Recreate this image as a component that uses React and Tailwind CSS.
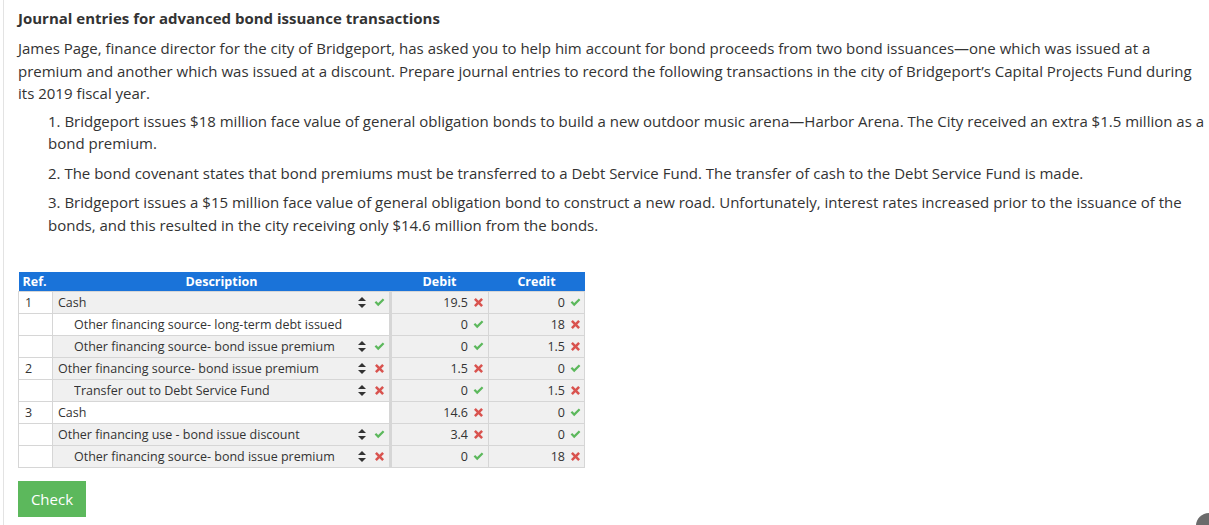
import React from "react";

const Sort = () => (
  <svg width="8" height="11" viewBox="0 0 8 11" className="inline-block">
    <path d="M4 0 L8 4 L0 4 Z" fill="#333" />
    <path d="M0 7 L8 7 L4 11 Z" fill="#333" />
  </svg>
);

const Ok = () => (
  <svg width="11" height="9" viewBox="0 0 11 9" className="inline-block">
    <path d="M0.6 4.6 L2.2 3 L4.2 5 L8.8 0.4 L10.4 2 L4.2 8.2 Z" fill="#5cb85c" />
  </svg>
);

const Bad = () => (
  <svg width="9" height="9" viewBox="0 0 9 9" className="inline-block">
    <path d="M1.8 0 L4.5 2.7 L7.2 0 L9 1.8 L6.3 4.5 L9 7.2 L7.2 9 L4.5 6.3 L1.8 9 L0 7.2 L2.7 4.5 L0 1.8 Z" fill="#d9534f" />
  </svg>
);

const rows = [
  { ref: "1", desc: "Cash", indent: false, sel: true, dOk: true, debit: "19.5", dbOk: false, credit: "0", crOk: true },
  { ref: "", desc: "Other financing source- long-term debt issued", indent: true, sel: false, debit: "0", dbOk: true, credit: "18", crOk: false },
  { ref: "", desc: "Other financing source- bond issue premium", indent: true, sel: true, dOk: true, debit: "0", dbOk: true, credit: "1.5", crOk: false },
  { ref: "2", desc: "Other financing source- bond issue premium", indent: false, sel: true, dOk: false, debit: "1.5", dbOk: false, credit: "0", crOk: true },
  { ref: "", desc: "Transfer out to Debt Service Fund", indent: true, sel: true, dOk: false, debit: "0", dbOk: true, credit: "1.5", crOk: false },
  { ref: "3", desc: "Cash", indent: false, sel: false, debit: "14.6", dbOk: false, credit: "0", crOk: true },
  { ref: "", desc: "Other financing use - bond issue discount", indent: false, sel: true, dOk: true, debit: "3.4", dbOk: false, credit: "0", crOk: true },
  { ref: "", desc: "Other financing source- bond issue premium", indent: true, sel: true, dOk: false, debit: "0", dbOk: true, credit: "18", crOk: false },
];

export default function App() {
  return (
    <div className="relative h-[525px] overflow-hidden bg-white font-['Open_Sans',sans-serif] text-[#333]">
      <div className="ml-[3px] h-full border-l border-[#e3e3e3] pl-[14px]">
        <h1 className="pt-[7px] text-[15px] font-bold leading-[22px]">
          Journal entries for advanced bond issuance transactions
        </h1>
        <p className="mt-[8px] pr-[6px] text-[15px] leading-[22.5px]">
          James Page, finance director for the city of Bridgeport, has asked you to help him account for bond proceeds from two bond issuances—one which was issued at a premium and another which was issued at a discount. Prepare journal entries to record the following transactions in the city of Bridgeport’s Capital Projects Fund during its 2019 fiscal year.
        </p>
        <div className="mt-[5px] flex flex-col gap-[7px] pl-[30px] text-[15px] leading-[22.5px]">
          <p>1. Bridgeport issues $18 million face value of general obligation bonds to build a new outdoor music arena—Harbor Arena. The City received an extra $1.5 million as a bond premium.</p>
          <p>2. The bond covenant states that bond premiums must be transferred to a Debt Service Fund. The transfer of cash to the Debt Service Fund is made.</p>
          <p className="pr-[6px]">3. Bridgeport issues a $15 million face value of general obligation bond to construct a new road. Unfortunately, interest rates increased prior to the issuance of the bonds, and this resulted in the city receiving only $14.6 million from the bonds.</p>
        </div>

        <table className="mt-[36px] w-[566px] table-fixed border-collapse text-[12.5px]">
          <colgroup>
            <col className="w-[34px]" />
            <col className="w-[338px]" />
            <col className="w-[98px]" />
            <col className="w-[96px]" />
          </colgroup>
          <thead>
            <tr className="h-[19px] bg-[#1a73d9] text-white">
              <th className="px-[4px] text-left font-bold leading-[19px]">Ref.</th>
              <th className="font-bold leading-[19px]">Description</th>
              <th className="font-bold leading-[19px]">Debit</th>
              <th className="font-bold leading-[19px]">Credit</th>
            </tr>
          </thead>
          <tbody>
            {rows.map((r, i) => (
              <tr key={i} className="h-[22px]">
                <td className="border border-[#d6d6d6] bg-white px-[6px] leading-[21px]">{r.ref}</td>
                <td className={`border border-[#d6d6d6] leading-[21px] ${r.sel ? "bg-[#f0f0f0]" : "bg-white"}`}>
                  <div className={`flex items-center ${r.indent ? "pl-[21px]" : "pl-[5px]"} pr-[4px]`}>
                    <span className="flex-1 truncate">{r.desc}</span>
                    {r.sel && (
                      <span className="flex items-center gap-[8px]">
                        <Sort />
                        <span className="flex w-[11px] justify-center">{r.dOk ? <Ok /> : <Bad />}</span>
                      </span>
                    )}
                  </div>
                </td>
                <td className="border border-l-[3px] border-[#d6d6d6] bg-[#f0f0f0] leading-[21px]">
                  <div className="flex items-center justify-end gap-[5px] pr-[4px]">
                    <span>{r.debit}</span>
                    <span className="flex w-[11px] justify-center">{r.dbOk ? <Ok /> : <Bad />}</span>
                  </div>
                </td>
                <td className="border border-[#d6d6d6] bg-[#f0f0f0] leading-[21px]">
                  <div className="flex items-center justify-end gap-[5px] pr-[3px]">
                    <span>{r.credit}</span>
                    <span className="flex w-[11px] justify-center">{r.crOk ? <Ok /> : <Bad />}</span>
                  </div>
                </td>
              </tr>
            ))}
          </tbody>
        </table>

        <button className="mt-[13px] h-[36px] w-[68px] bg-[#5cb85c] text-[15px] text-white">
          Check
        </button>
      </div>
      <div className="absolute left-[1196px] top-[513px] h-[26px] w-[26px] rounded-full bg-[#6b6b6b]" />
    </div>
  );
}
